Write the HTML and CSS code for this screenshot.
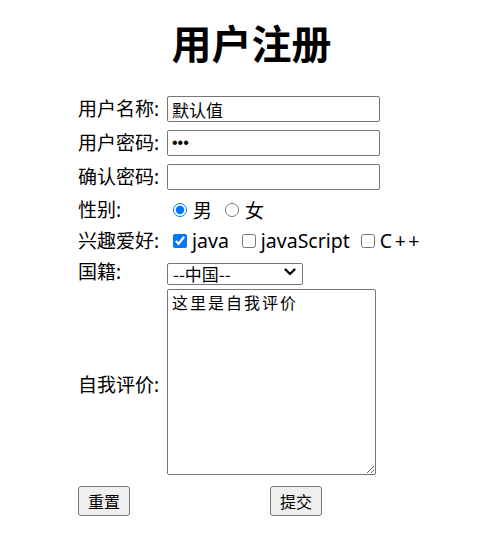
FILE: index.html
```html
<!DOCTYPE html>
<html lang="zh">
<head>
<meta charset="utf-8">
<title>用户注册</title>
<link rel="stylesheet" href="styles.css">
</head>
<body>
<div class="page">
  <h1 class="title">用户注册</h1>
  <form class="form">
    <div class="lbl">用户名称:</div>
    <div class="ctl"><input class="txt" type="text" value="默认值"></div>

    <div class="lbl">用户密码:</div>
    <div class="ctl"><input class="txt pwd" type="password" value="123"></div>

    <div class="lbl">确认密码:</div>
    <div class="ctl"><input class="txt pwd" type="password"></div>

    <div class="lbl">性别:</div>
    <div class="ctl opts">
      <label class="opt opt-first"><input class="radio" type="radio" name="sex" checked><span>男</span></label>
      <label class="opt opt-girl"><input class="radio" type="radio" name="sex"><span>女</span></label>
    </div>

    <div class="lbl">兴趣爱好:</div>
    <div class="ctl opts">
      <label class="opt opt-first"><input class="check" type="checkbox" checked><span class="latin">java</span></label>
      <label class="opt opt-js"><input class="check" type="checkbox"><span class="latin">javaScript</span></label>
      <label class="opt opt-cpp"><input class="check" type="checkbox"><span class="latin cpp">C++</span></label>
    </div>

    <div class="lbl">国籍:</div>
    <div class="ctl">
      <div class="sel-wrap">
        <select class="sel"><option>--中国--</option><option>--美国--</option></select>
        <svg class="chev" width="12" height="8" viewBox="0 0 12 8" aria-hidden="true"><path d="M1.5 1.5 L6 6 L10.5 1.5" fill="none" stroke="#000" stroke-width="2.2" stroke-linecap="round" stroke-linejoin="round"/></svg>
      </div>
    </div>

    <div class="lbl">自我评价:</div>
    <div class="ctl ctl-top"><textarea class="area">这里是自我评价</textarea></div>

    <div class="btn-cell"><button class="btn" type="reset">重置</button></div>
    <div class="btn-cell btn-center"><button class="btn" type="submit">提交</button></div>
  </form>
</div>
</body>
</html>
```

FILE: styles.css
```css
html, body {
  margin: 0;
  padding: 0;
  background: #ffffff;
  color: #000000;
}

body {
  font-family: "Noto Sans", "Noto Sans CJK SC", sans-serif;
  font-size: 19px;
}

.page {
  width: 347px;
  margin-left: 78px;
  padding-top: 22px;
}

.title {
  margin: 0;
  font-family: "Noto Sans CJK SC", sans-serif;
  font-size: 40px;
  line-height: 40px;
  font-weight: 700;
  text-align: center;
}

.form {
  margin-top: 32px;
  display: grid;
  grid-template-columns: 89px 258px;
  grid-template-rows: 30px 30px 30px 28px 26px 27px 192px auto;
  row-gap: 4px;
}

.lbl {
  align-self: center;
  font-family: "Noto Sans", "Noto Sans CJK SC", sans-serif;
  line-height: 24px;
  white-space: nowrap;
}

.ctl {
  display: flex;
  align-items: center;
}

.ctl-top {
  align-items: flex-start;
}

.txt {
  box-sizing: border-box;
  width: 213px;
  height: 26px;
  margin: 0;
  padding: 1px 4px;
  border: 1px solid #767676;
  border-radius: 2px;
  font-family: "Noto Sans CJK SC", sans-serif;
  font-size: 17px;
  color: #000;
  background: #fff;
}

.pwd {
  font-family: "Liberation Sans", sans-serif;
  font-size: 16px;
}

.opts {
  gap: 0;
}

.opt {
  display: flex;
  align-items: center;
  line-height: 24px;
}

.opt span {
  font-family: "Noto Sans CJK SC", sans-serif;
}

.opt .latin {
  font-family: "Noto Sans", sans-serif;
  font-size: 19.5px;
}

.opt .cpp {
  letter-spacing: 2.5px;
}

.radio, .check {
  width: 14px;
  height: 14px;
  margin: 0 5px 0 0;
}

.radio {
  margin-right: 6px;
}

.opt-first {
  margin-left: 6px;
}

.opt-girl {
  margin-left: 13px;
}

.opt-js {
  margin-left: 13px;
}

.opt-cpp {
  margin-left: 11px;
}

.sel-wrap {
  position: relative;
  width: 136px;
  height: 22px;
}

.sel {
  -webkit-appearance: none;
  appearance: none;
  box-sizing: border-box;
  width: 136px;
  height: 22px;
  margin: 0;
  padding: 0 20px 0 5px;
  border: 1px solid #767676;
  border-radius: 2px;
  font-family: "Noto Sans CJK SC", sans-serif;
  font-size: 17px;
  line-height: 20px;
  color: #000;
  background: #fff;
}

.chev {
  position: absolute;
  left: 117px;
  top: 7px;
  pointer-events: none;
}

.area {
  box-sizing: border-box;
  width: 209px;
  height: 186px;
  margin: 0;
  padding: 2px 4px;
  border: 1px solid #767676;
  border-radius: 2px;
  font-family: "Noto Sans CJK SC", sans-serif;
  font-size: 16px;
  letter-spacing: 2px;
  line-height: 20px;
  color: #000;
  background: #fff;
}

.btn-cell {
  align-self: start;
  padding-top: 1px;
}

.btn-center {
  display: flex;
  justify-content: center;
}

.btn {
  box-sizing: border-box;
  width: 52px;
  height: 30px;
  margin: 0;
  padding: 0;
  border: 1px solid #767676;
  border-radius: 3px;
  background: #efefef;
  font-family: "Noto Sans CJK SC", sans-serif;
  font-size: 16px;
  color: #000;
}
```
